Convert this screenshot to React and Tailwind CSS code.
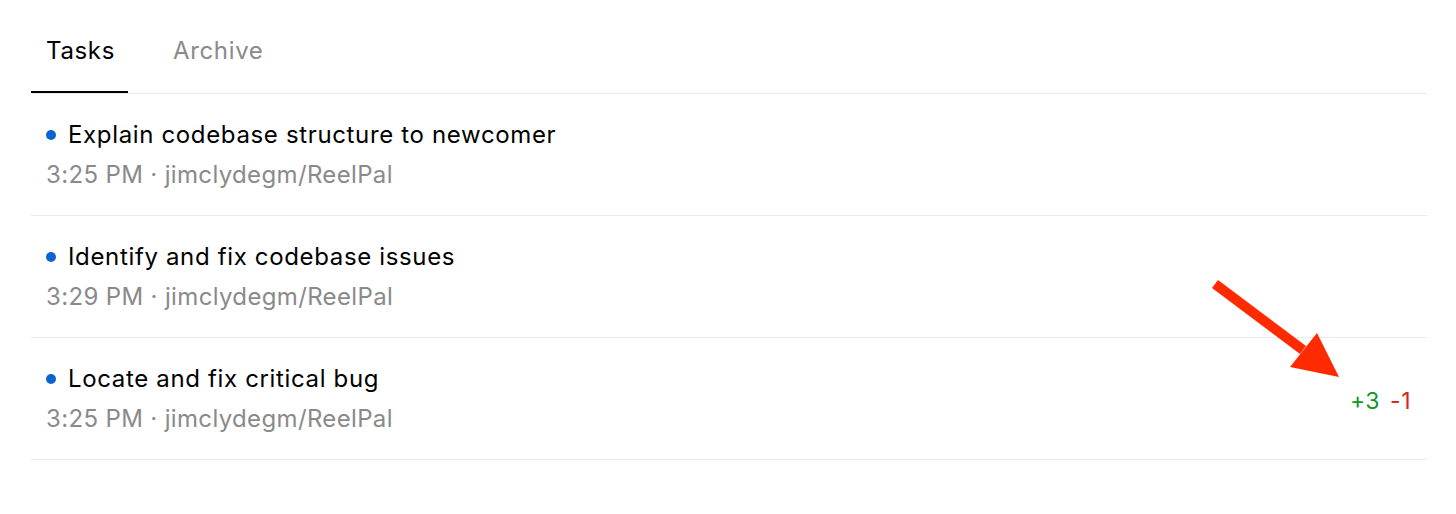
import React from "react";

const rows = [
  { title: "Explain codebase structure to newcomer", time: "3:25 PM", repo: "jimclydegm/ReelPal" },
  { title: "Identify and fix codebase issues", time: "3:29 PM", repo: "jimclydegm/ReelPal" },
  { title: "Locate and fix critical bug", time: "3:25 PM", repo: "jimclydegm/ReelPal", diff: true },
];

export default function App() {
  return (
    <div className="relative w-[1456px] h-[514px] bg-white" style={{ fontFamily: "Inter, 'Noto Sans', sans-serif" }}>
      <div className="pl-[31px] pr-[29px]">
        <div className="flex gap-[30px] border-b border-[#ebebeb]">
          <div className="pl-[15px] pr-[13px] pt-[36px] pb-[25px] border-b-2 border-black text-[24px] leading-[30px] tracking-[0.65px] text-black">Tasks</div>
          <div className="pl-[15px] pr-[13px] pt-[36px] pb-[25px] border-b-2 border-transparent text-[24px] leading-[30px] tracking-[0.65px] text-[#8a8a8a]">Archive</div>
        </div>
        {rows.map((r, i) => (
          <div key={i} className="flex items-center justify-between border-b border-[#ebebeb] pl-[15px] pr-[16px] pt-[26px] pb-[25px]">
            <div className="flex flex-col gap-[10px]">
              <div className="flex items-center gap-[12px]">
                <span className="w-[10px] h-[10px] rounded-full bg-[#0b63d1]"></span>
                <span className="text-[24px] leading-[30px] tracking-[0.65px] text-black">{r.title}</span>
              </div>
              <div className="text-[24px] leading-[30px] tracking-[0.35px] text-[#8a8a8a]">
                {r.time} · {r.repo}
              </div>
            </div>
            {r.diff && (
              <div className="flex gap-[10px] text-[23px] leading-[30px] tracking-[0.5px] pt-[3px]">
                <span className="text-[#13962a]">+3</span>
                <span className="text-[#dc1f1f]">-1</span>
              </div>
            )}
          </div>
        ))}
      </div>
      <svg className="absolute left-0 top-0 pointer-events-none" width="1456" height="514">
        <line x1="1215" y1="284" x2="1303" y2="350" stroke="#ff2a00" strokeWidth="10" />
        <polygon points="1290,367 1317,333 1339,377" fill="#ff2a00" />
      </svg>
    </div>
  );
}
